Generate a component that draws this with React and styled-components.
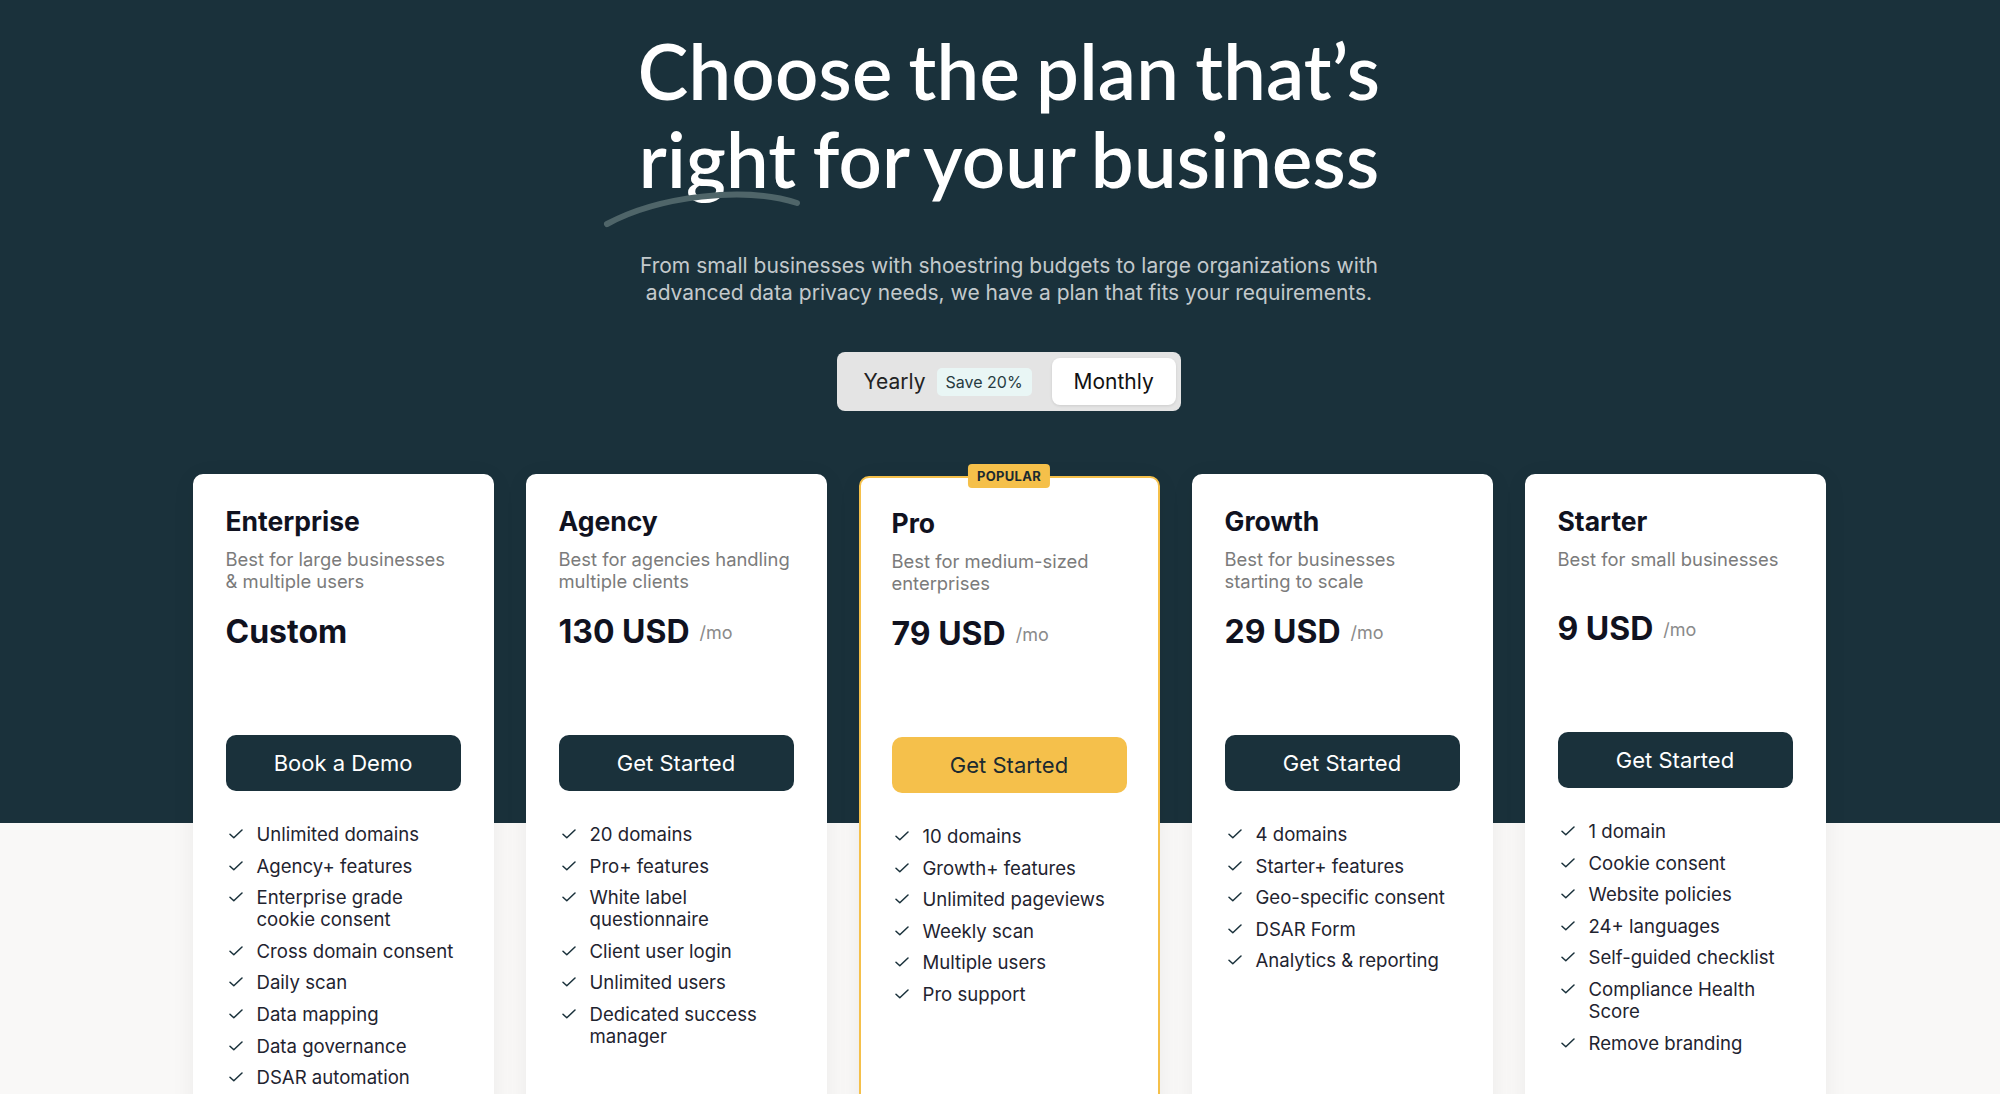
import React from "react";
import styled, { createGlobalStyle } from "styled-components";

const GlobalStyle = createGlobalStyle`
  html, body { margin: 0; padding: 0; }
  body {
    font-family: Inter, "Noto Sans", sans-serif;
    background: #f9f8f7;
    -webkit-font-smoothing: antialiased;
  }
  * { box-sizing: border-box; }
`;

const Page = styled.main`
  height: 100vh;
  overflow: hidden;
  padding-left: 18px;
  display: flex;
  flex-direction: column;
  align-items: center;
  background: linear-gradient(to bottom, #1a313b 0, #1a313b 823px, #f9f8f7 823px);
`;

const Title = styled.h1`
  position: relative;
  width: fit-content;
  margin: 27px 0 0;
  font-family: Lato, "Liberation Sans", sans-serif;
  font-weight: 600;
  font-size: 76px;
  line-height: 88px;
  letter-spacing: 0.2px;
  word-spacing: -3px;
  color: #fff;
  text-align: center;
`;

// decorative swoosh under "right"
const Swoosh = styled.svg`
  position: absolute;
  left: -34px;
  top: 164px;
  overflow: visible;
  pointer-events: none;
`;

const Subtitle = styled.p`
  margin: 49px 0 0;
  font-size: 21px;
  line-height: 27px;
  color: #c3c9cc;
  text-align: center;
`;

const Toggle = styled.div`
  margin-top: 46px;
  height: 59px;
  display: flex;
  align-items: center;
  padding: 6px 5px 6px 26px;
  background: #e4e4e4;
  border-radius: 8px;
`;

const ToggleLabel = styled.span`
  font-size: 21px;
  color: ${(p) => (p.$active ? "#111" : "#222")};
`;

const SaveBadge = styled.span`
  margin: 0 20px 0 11px;
  height: 28px;
  padding: 0 9px;
  display: inline-flex;
  align-items: center;
  border-radius: 5px;
  background: #e9f6f5;
  color: #273b41;
  font-size: 16px;
`;

const ActivePill = styled.span`
  height: 47px;
  width: 124px;
  display: flex;
  align-items: center;
  justify-content: center;
  background: #fff;
  border-radius: 8px;
  box-shadow: 0 1px 3px rgba(0, 0, 0, 0.1);
`;

const Cards = styled.section`
  margin-top: 63px;
  display: flex;
  align-items: flex-start;
  gap: 32px;
`;

const Card = styled.article`
  position: relative;
  width: 301px;
  min-height: 660px;
  margin-top: ${(p) => (p.$popular ? "2px" : "0")};
  padding: 29px 31px;
  background: #fff;
  border: 2px solid ${(p) => (p.$popular ? "#f5c04a" : "#fff")};
  border-radius: 10px;
  box-shadow: 0 4px 24px rgba(20, 30, 40, 0.06);
`;

const PopularTag = styled.span`
  position: absolute;
  top: -14px;
  left: 50%;
  transform: translateX(-50%);
  padding: 0 9px;
  height: 24px;
  display: flex;
  align-items: center;
  background: #f5c04a;
  border-radius: 4px;
  font-size: 13px;
  font-weight: 700;
  letter-spacing: 0.3px;
  color: #1b2a30;
`;

const PlanName = styled.h2`
  margin: 0;
  font-size: 26.5px;
  line-height: 32px;
  font-weight: 700;
  color: #10121f;
`;

const PlanDesc = styled.p`
  margin: 11px 0 0;
  min-height: 41px;
  font-size: 18.4px;
  line-height: 22px;
  color: #7b7b7b;
`;

const PriceRow = styled.div`
  margin-top: 21px;
  display: flex;
  align-items: center;
  gap: 10px;
`;

const Amount = styled.span`
  font-size: 32px;
  line-height: 38px;
  font-weight: 700;
  color: #10121f;
`;

const Per = styled.span`
  font-size: 18px;
  color: #8a8a8a;
`;

const CtaButton = styled.button`
  margin-top: 84px;
  width: 100%;
  height: 56px;
  border: none;
  border-radius: 10px;
  font-family: Inter, sans-serif;
  font-size: 22px;
  font-weight: 400;
  cursor: pointer;
  background: ${(p) => (p.$popular ? "#f5c04b" : "#1a313b")};
  color: ${(p) => (p.$popular ? "#1b2a30" : "#fff")};
`;

const Features = styled.ul`
  margin: 32px 0 0;
  padding: 0;
  list-style: none;
  display: flex;
  flex-direction: column;
  gap: 9.6px;
`;

const Feature = styled.li`
  display: flex;
  gap: 11px;
  font-size: 18.6px;
  line-height: 22px;
  color: #1f2430;
`;

const CheckBox = styled.span`
  flex: none;
  width: 20px;
  height: 22px;
  display: flex;
  align-items: center;
  justify-content: center;
`;

const Check = () => (
  <CheckBox>
    <svg width="14" height="10" viewBox="0 0 14 10" fill="none">
      <path d="M1 5.2l3.8 3.6L13 1" stroke="#1a313b" strokeWidth="1.5" strokeLinecap="round" strokeLinejoin="round" />
    </svg>
  </CheckBox>
);

const plans = [
  {
    name: "Enterprise",
    desc: "Best for large businesses & multiple users",
    price: "Custom",
    cta: "Book a Demo",
    features: [
      "Unlimited domains",
      "Agency+ features",
      "Enterprise grade cookie consent",
      "Cross domain consent",
      "Daily scan",
      "Data mapping",
      "Data governance",
      "DSAR automation",
    ],
  },
  {
    name: "Agency",
    desc: "Best for agencies handling multiple clients",
    price: "130 USD",
    per: true,
    cta: "Get Started",
    features: [
      "20 domains",
      "Pro+ features",
      "White label questionnaire",
      "Client user login",
      "Unlimited users",
      "Dedicated success manager",
    ],
  },
  {
    name: "Pro",
    desc: "Best for medium-sized enterprises",
    price: "79 USD",
    per: true,
    cta: "Get Started",
    popular: true,
    features: [
      "10 domains",
      "Growth+ features",
      "Unlimited pageviews",
      "Weekly scan",
      "Multiple users",
      "Pro support",
    ],
  },
  {
    name: "Growth",
    desc: "Best for businesses starting to scale",
    price: "29 USD",
    per: true,
    cta: "Get Started",
    features: [
      "4 domains",
      "Starter+ features",
      "Geo-specific consent",
      "DSAR Form",
      "Analytics & reporting",
    ],
  },
  {
    name: "Starter",
    desc: "Best for small businesses",
    price: "9 USD",
    per: true,
    cta: "Get Started",
    features: [
      "1 domain",
      "Cookie consent",
      "Website policies",
      "24+ languages",
      "Self-guided checklist",
      "Compliance Health Score",
      "Remove branding",
    ],
  },
];

const PlanCard = ({ plan }) => (
  <Card $popular={plan.popular}>
    {plan.popular && <PopularTag>POPULAR</PopularTag>}
    <PlanName>{plan.name}</PlanName>
    <PlanDesc>{plan.desc}</PlanDesc>
    <PriceRow>
      <Amount>{plan.price}</Amount>
      {plan.per && <Per>/mo</Per>}
    </PriceRow>
    <CtaButton $popular={plan.popular}>{plan.cta}</CtaButton>
    <Features>
      {plan.features.map((f) => (
        <Feature key={f}>
          <Check />
          <span>{f}</span>
        </Feature>
      ))}
    </Features>
  </Card>
);

export default function App() {
  return (
    <>
      <GlobalStyle />
      <Page>
        <Title>
          Choose the plan that’s
          <br />
          right for your business
          <Swoosh width="200" height="40" viewBox="0 0 200 40">
            <path d="M3 33 C 55 5, 140 -5, 193 12" stroke="#4f6569" strokeWidth="6" strokeLinecap="round" fill="none" />
          </Swoosh>
        </Title>
        <Subtitle>
          From small businesses with shoestring budgets to large organizations with
          <br />
          advanced data privacy needs, we have a plan that fits your requirements.
        </Subtitle>
        <Toggle>
          <ToggleLabel>Yearly</ToggleLabel>
          <SaveBadge>Save 20%</SaveBadge>
          <ActivePill>
            <ToggleLabel $active>Monthly</ToggleLabel>
          </ActivePill>
        </Toggle>
        <Cards>
          {plans.map((p) => (
            <PlanCard key={p.name} plan={p} />
          ))}
        </Cards>
      </Page>
    </>
  );
}
